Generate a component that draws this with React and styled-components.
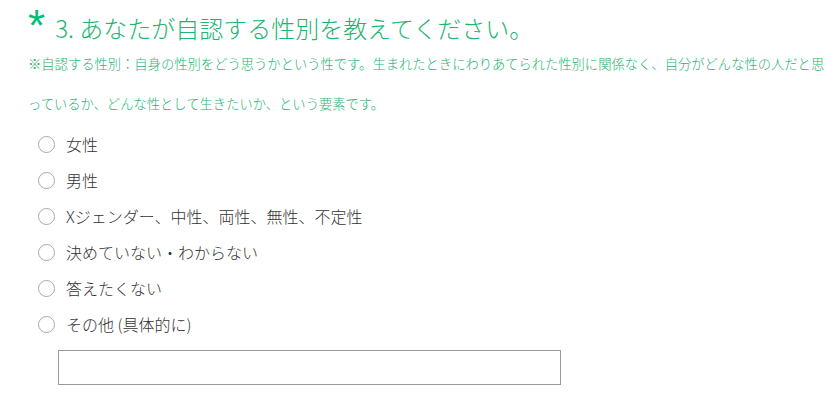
import React from "react";
import styled, { createGlobalStyle } from "styled-components";

const GlobalStyle = createGlobalStyle`
  html, body {
    margin: 0;
    padding: 0;
    background: #fff;
  }
  body {
    font-family: "Noto Sans CJK JP", "Noto Sans", sans-serif;
  }
`;

const options = [
  "女性",
  "男性",
  "Xジェンダー、中性、両性、無性、不定性",
  "決めていない・わからない",
  "答えたくない",
  "その他 (具体的に)",
];

export default function App() {
  return (
    <Page lang="ja">
      <GlobalStyle />
      <Heading>
        <Star>*</Star>
        <span>3. あなたが自認する性別を教えてください。</span>
      </Heading>
      <Note>
        ※自認する性別：自身の性別をどう思うかという性です。生まれたときにわりあてられた性別に関係なく、自分がどんな性の人だと思っているか、どんな性として生きたいか、という要素です。
      </Note>
      <OptionList>
        {options.map((label) => (
          <Option key={label}>
            <Radio type="radio" name="gender" />
            <span>{label}</span>
          </Option>
        ))}
      </OptionList>
      <OtherInput type="text" />
    </Page>
  );
}

const Page = styled.div`
  width: 838px;
  height: 407px;
  box-sizing: border-box;
  padding-left: 28px;
  overflow: hidden;
`;

const Heading = styled.h2`
  display: flex;
  align-items: flex-start;
  margin: 0;
  padding-top: 10px;
  height: 44px;
  box-sizing: border-box;
  font-size: 24px;
  font-weight: 300;
  line-height: 36px;
  color: #1db570;
  white-space: nowrap;
`;

const Star = styled.span`
  font-family: "Liberation Sans", sans-serif;
  font-size: 44px;
  line-height: 40px;
  color: #00c078;
  margin: -4px 10px 0 0;
`;

const Note = styled.p`
  margin: 0;
  padding-right: 8px;
  font-size: 13.3px;
  font-weight: 300;
  line-height: 40px;
  color: #1fb470;
  line-break: loose;
`;

const OptionList = styled.div`
  display: flex;
  flex-direction: column;
  margin-top: 2px;
`;

const Option = styled.label`
  display: flex;
  align-items: center;
  gap: 11px;
  height: 36px;
  padding-left: 10px;
  font-size: 16px;
  font-weight: 300;
  color: #333;
`;

const Radio = styled.input`
  appearance: none;
  flex-shrink: 0;
  margin: 0;
  width: 17px;
  height: 17px;
  border: 1px solid #a8a8a8;
  border-radius: 50%;
  background: #fff;
  box-sizing: border-box;
`;

const OtherInput = styled.input`
  display: block;
  margin: 8px 0 0 30px;
  width: 503px;
  height: 35px;
  box-sizing: border-box;
  border: 1px solid #999;
  border-radius: 0;
  outline: none;
`;
